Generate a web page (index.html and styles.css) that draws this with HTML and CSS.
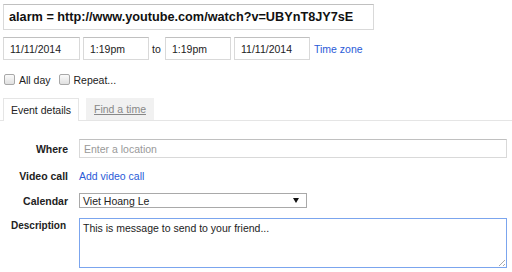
FILE: index.html
```html
<!DOCTYPE html>
<html lang="en">
<head>
    <meta charset="UTF-8">
    <title>Edit event</title>
    <link rel="stylesheet" href="styles.css">
</head>
<body>
    <!-- Title -->
    <div class="title-box">alarm = http://www.youtube.com/watch?v=UBYnT8JY7sE</div>

    <!-- Date / time row -->
    <div class="time-row">
        <div class="field w-date">11/11/2014</div>
        <div class="field w-time">1:19pm</div>
        <span class="to">to</span>
        <div class="field w-time">1:19pm</div>
        <div class="field w-date2">11/11/2014</div>
        <a class="link tz" href="#tz">Time zone</a>
    </div>

    <!-- Options -->
    <div class="check-row">
        <span class="check"></span><span class="check-label">All day</span>
        <span class="check"></span><span class="check-label">Repeat...</span>
    </div>

    <!-- Tabs -->
    <div class="tabs">
        <div class="tab active">Event details</div>
        <div class="tab other"><span>Find a time</span></div>
    </div>

    <!-- Details -->
    <div class="details">
        <div class="label">Where</div>
        <div class="field where"><span class="placeholder">Enter a location</span></div>

        <div class="label">Video call</div>
        <div class="plain"><a class="link" href="#video">Add video call</a></div>

        <div class="label">Calendar</div>
        <div class="select">
            <span>Viet Hoang Le</span>
            <span class="arrow"></span>
        </div>

        <div class="label desc">Description</div>
        <div class="textarea">This is message to send to your friend...<span class="grip"></span></div>
    </div>
</body>
</html>
```

FILE: styles.css
```css
body {
    font-family: "Liberation Sans", Arial, sans-serif;
    font-size: 10.5px;
    color: #222;
    background-color: #fff;
    margin: 0;
    padding: 4px 3px;
}

a {
    text-decoration: none;
}

.link {
    color: #2a5bd7;
}

/* Title */
.title-box {
    width: 371px;
    height: 26px;
    box-sizing: border-box;
    border: 1px solid #d9d9d9;
    border-top-color: #c0c0c0;
    padding-left: 5px;
    display: flex;
    align-items: center;
    font-size: 12.7px;
    font-weight: bold;
    color: #111;
}

/* Date / time row */
.time-row {
    display: flex;
    align-items: center;
    margin-top: 7px;
    height: 23px;
}

.field {
    height: 23px;
    box-sizing: border-box;
    border: 1px solid #d9d9d9;
    border-top-color: #c0c0c0;
    padding-left: 6px;
    display: flex;
    align-items: center;
}

.w-date {
    width: 77px;
    margin-right: 3px;
}

.w-time {
    width: 66px;
}

.w-date2 {
    width: 76px;
    margin-left: 3px;
}

.to {
    width: 16px;
    padding-left: 3px;
    box-sizing: border-box;
}

.tz {
    margin-left: 4px;
}

/* Checkboxes */
.check-row {
    display: flex;
    align-items: center;
    margin-top: 13px;
    height: 13px;
}

.check {
    width: 9px;
    height: 9px;
    border: 1px solid #a8a8a8;
    border-radius: 2px;
    background: linear-gradient(#fafafa, #e0e0e0);
    margin-left: 1px;
}

.check-label {
    margin-left: 4px;
    margin-right: 7px;
}

/* Tabs */
.tabs {
    display: flex;
    align-items: flex-end;
    margin: 12px -3px 0;
    padding-left: 3px;
    border-bottom: 1px solid #e5e5e5;
    height: 22px;
}

.tab {
    height: 22px;
    box-sizing: border-box;
    display: flex;
    align-items: center;
    justify-content: center;
}

.tab.active {
    width: 76px;
    border: 1px solid #e5e5e5;
    border-bottom: none;
    background: #fff;
    height: 23px;
    margin-bottom: -1px;
}

.tab.other {
    width: 68px;
    margin-left: 7px;
    background: #f1f1f1;
    color: #888;
}

.tab.other span {
    text-decoration: underline;
}

/* Details grid */
.details {
    display: grid;
    grid-template-columns: 65px 428px;
    column-gap: 11px;
    row-gap: 10px;
    margin-top: 18px;
}

.label {
    font-weight: bold;
    text-align: right;
    display: flex;
    align-items: center;
    justify-content: flex-end;
}

.label.desc {
    align-items: flex-start;
    padding-top: 2px;
    padding-right: 2px;
    font-size: 10px;
}

.field.where {
    height: 19px;
    padding-left: 4px;
}

.placeholder {
    color: #999;
}

.plain {
    height: 15px;
    display: flex;
    align-items: center;
}

.select {
    width: 228px;
    height: 15px;
    box-sizing: border-box;
    border: 1px solid #a9a9a9;
    padding: 0 5px 0 3px;
    display: flex;
    align-items: center;
    justify-content: space-between;
}

.arrow {
    width: 0;
    height: 0;
    border-left: 3px solid transparent;
    border-right: 3px solid transparent;
    border-top: 5px solid #111;
    margin-right: 2px;
}

.textarea {
    position: relative;
    height: 50px;
    box-sizing: border-box;
    border: 1px solid #7ba5ee;
    padding: 3px 3px;
}

.grip {
    position: absolute;
    right: 1px;
    bottom: 1px;
    width: 6px;
    height: 6px;
    background: linear-gradient(135deg, transparent 45%, #aaa 45%, #aaa 55%, transparent 55%, transparent 75%, #aaa 75%, #aaa 85%, transparent 85%);
}
```
